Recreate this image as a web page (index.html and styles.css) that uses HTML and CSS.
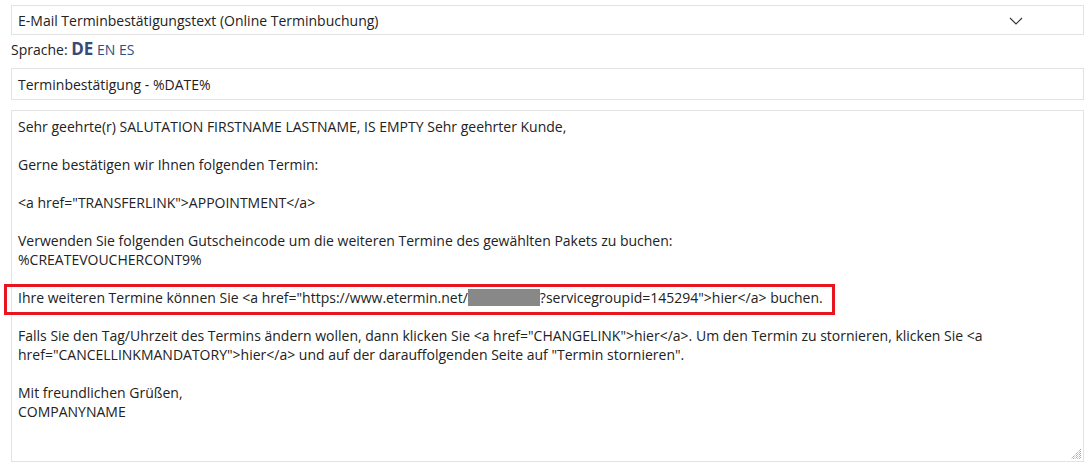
FILE: index.html
```html
<!DOCTYPE html>
<html lang="de">
<head>
<meta charset="utf-8">
<link rel="stylesheet" href="styles.css">
</head>
<body>
<div class="page">
  <div class="select">
    <span class="select-text">E-Mail Terminbestätigungstext (Online Terminbuchung)</span>
    <svg class="chevron" width="14" height="8" viewBox="0 0 14 8"><path d="M1 1 L7 7 L13 1" fill="none" stroke="#333" stroke-width="1.1"/></svg>
  </div>
  <div class="lang">Sprache: <span class="lang-active">DE</span> <span class="lang-link">EN</span> <span class="lang-link">ES</span></div>
  <div class="input">Terminbestätigung - %DATE%</div>
  <div class="textarea">
    <div class="line">Sehr geehrte(r) SALUTATION FIRSTNAME LASTNAME, IS EMPTY Sehr geehrter Kunde,</div>
    <div class="line blank"></div>
    <div class="line">Gerne bestätigen wir Ihnen folgenden Termin:</div>
    <div class="line blank"></div>
    <div class="line">&lt;a href="TRANSFERLINK"&gt;APPOINTMENT&lt;/a&gt;</div>
    <div class="line blank"></div>
    <div class="line">Verwenden Sie folgenden Gutscheincode um die weiteren Termine des gewählten Pakets zu buchen:</div>
    <div class="line">%CREATEVOUCHERCONT9%</div>
    <div class="line blank"></div>
    <div class="line highlight">Ihre weiteren Termine können Sie &lt;a href="https://www.etermin.net/<span class="redact"></span>?servicegroupid=145294"&gt;hier&lt;/a&gt; buchen.<span class="mark"></span></div>
    <div class="line blank"></div>
    <div class="line">Falls Sie den Tag/Uhrzeit des Termins ändern wollen, dann klicken Sie &lt;a href="CHANGELINK"&gt;hier&lt;/a&gt;. Um den Termin zu stornieren, klicken Sie &lt;a</div>
    <div class="line">href="CANCELLINKMANDATORY"&gt;hier&lt;/a&gt; und auf der darauffolgenden Seite auf "Termin stornieren".</div>
    <div class="line blank"></div>
    <div class="line">Mit freundlichen Grüßen,</div>
    <div class="line">COMPANYNAME</div>
    <svg class="grip" width="12" height="12" viewBox="0 0 12 12"><path d="M11 3 L3 11 M11 5 L5 11 M11 7 L7 11 M11 9 L9 11 M11 1 L1 11" stroke="#888" stroke-width="1" stroke-dasharray="1 1"/></svg>
  </div>
</div>
</body>
</html>
```
FILE: styles.css
```css
html, body {
  margin: 0;
  padding: 0;
  background: #fff;
}
body {
  font-family: "Open Sans", "Liberation Sans", sans-serif;
  font-size: 14px;
  color: #222;
}
.page {
  padding: 5px 8px 0 11px;
  display: flex;
  flex-direction: column;
  width: 1073px;
}
.select {
  height: 28px;
  border: 1px solid #e3e3e3;
  display: flex;
  align-items: center;
  padding: 0 6px;
  justify-content: space-between;
}
.select-text {
  line-height: 19px;
}
.chevron {
  margin-right: 54px;
  margin-top: 1px;
}
.lang {
  height: 22px;
  line-height: 22px;
  margin-top: 3px;
  margin-bottom: 8px;
}
.lang-active {
  font-size: 17px;
  font-weight: 700;
  color: #35497a;
}
.lang-link {
  color: #2e4e8a;
}
.input {
  height: 30px;
  border: 1px solid #e3e3e3;
  padding: 0 6px;
  display: flex;
  align-items: center;
  margin-bottom: 10px;
}
.textarea {
  position: relative;
  border: 1px solid #e3e3e3;
  height: 338px;
  padding: 6px 6px;
}
.line {
  line-height: 19px;
  height: 19px;
  white-space: nowrap;
}
.highlight {
  position: relative;
}
.redact {
  display: inline-block;
  width: 72px;
  height: 17px;
  background: #888;
  vertical-align: -3px;
}
.mark {
  position: absolute;
  left: -14px;
  top: -4px;
  width: 825px;
  height: 25px;
  border: 3px solid #e8141e;
}
.grip {
  position: absolute;
  right: 1px;
  bottom: 1px;
}
```
